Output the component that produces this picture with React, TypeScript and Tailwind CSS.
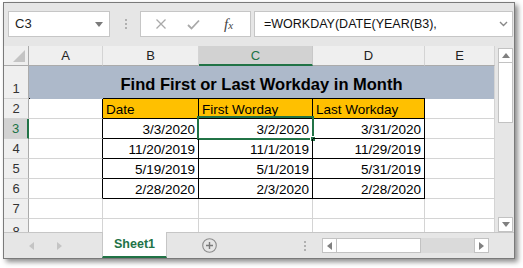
import React from "react";

// column widths include the 1px right gridline
const COLS = [
  { key: "A", w: 74 },
  { key: "B", w: 96 },
  { key: "C", w: 114 },
  { key: "D", w: 112 },
  { key: "E", w: 70 },
];

const DATA = [
  ["3/3/2020", "3/2/2020", "3/31/2020"],
  ["11/20/2019", "11/1/2019", "11/29/2019"],
  ["5/19/2019", "5/1/2019", "5/31/2019"],
  ["2/28/2020", "2/3/2020", "2/28/2020"],
];

function RowHead({ n, active, tall, cut }: { n: number; active?: boolean; tall?: boolean; cut?: boolean }) {
  return (
    <div
      className={`flex items-end justify-center text-[13px] leading-none ${
        tall ? "row-span-2 pb-[3px]" : cut ? "pb-0" : "pb-[3px]"
      } ${cut ? "" : "border-b border-[#d4d4d4]"} ${
        active
          ? "bg-[#d2d2d2] border-r-2 border-r-[#217346] text-[#217346]"
          : "bg-[#efefef] border-r border-r-[#ababab] text-[#333]"
      }`}
    >
      <span className={cut ? "translate-y-[6px]" : ""}>{n}</span>
    </div>
  );
}

function Cell({
  children,
  right,
  bottom,
  bg,
  align = "right",
}: {
  children?: React.ReactNode;
  right?: boolean;
  bottom?: boolean;
  bg?: string;
  align?: "left" | "right";
}) {
  return (
    <div
      className={`relative flex items-end border-r border-b pb-[2px] text-[13.5px] leading-none text-black ${
        align === "right" ? "justify-end pr-[3px]" : "justify-start pl-[3px]"
      } ${right ? "border-r-black" : "border-r-[#d4d4d4]"} ${
        bottom ? "border-b-black" : "border-b-[#d4d4d4]"
      } ${bg ?? ""}`}
    >
      {children}
    </div>
  );
}

function XIcon() {
  return (
    <svg width="12" height="12" viewBox="0 0 12 12">
      <path d="M1.5 1.5 L10.5 10.5 M10.5 1.5 L1.5 10.5" stroke="#a9a9a9" strokeWidth="1.3" fill="none" />
    </svg>
  );
}

function CheckIcon() {
  return (
    <svg width="13" height="11" viewBox="0 0 13 11">
      <path d="M1 6 L4.5 9.5 L12 1.5" stroke="#a9a9a9" strokeWidth="1.8" fill="none" />
    </svg>
  );
}

function Tri({ dir, color = "#808080" }: { dir: "up" | "down" | "left" | "right"; color?: string }) {
  const d =
    dir === "up"
      ? "M0 5 L4 0 L8 5 Z"
      : dir === "down"
        ? "M0 0 L8 0 L4 5 Z"
        : dir === "left"
          ? "M5 0 L5 8 L0 4 Z"
          : "M0 0 L0 8 L5 4 Z";
  const vert = dir === "up" || dir === "down";
  return (
    <svg width={vert ? 8 : 5} height={vert ? 5 : 8} viewBox={vert ? "0 0 8 5" : "0 0 5 8"}>
      <path d={d} fill={color} />
    </svg>
  );
}

function Dots({ className = "" }: { className?: string }) {
  return (
    <div className={`flex flex-col gap-[2px] ${className}`}>
      <span className="h-[2px] w-[2px] bg-[#b0b0b0]" />
      <span className="h-[2px] w-[2px] bg-[#b0b0b0]" />
      <span className="h-[2px] w-[2px] bg-[#b0b0b0]" />
    </div>
  );
}

export default function App() {
  return (
    <div className="h-[268px] w-[523px] overflow-hidden bg-white pl-[3px] pt-[2px] font-['Liberation_Sans',Arial,sans-serif]">
      <div className="flex h-[257px] w-[512px] flex-col border border-[#7a7a7a] bg-[#e6e6e6] shadow-[3px_3px_5px_rgba(0,0,0,0.45)]">
        {/* formula bar */}
        <div className="flex h-[43px] shrink-0 items-start pt-[8px]">
          <div className="ml-[4px] flex h-[26px] w-[102px] items-center justify-between border border-[#c6c6c6] bg-white pl-[6px] pr-[6px] text-[13px] text-[#222]">
            <span>C3</span>
            <Tri dir="down" color="#7a7a7a" />
          </div>
          <Dots className="ml-[15px] mt-[8px]" />
          <div className="ml-[13px] flex h-[26px] w-[111px] items-center border border-[#c6c6c6] bg-white">
            <span className="ml-[14px] flex"><XIcon /></span>
            <span className="ml-[20px] flex"><CheckIcon /></span>
            <span className="ml-[24px] font-['Liberation_Serif',serif] text-[15px] italic leading-none text-[#444]">
              f<span className="text-[11px]">x</span>
            </span>
          </div>
          <div className="ml-[3px] flex h-[26px] w-[259px] items-center justify-between border border-[#c6c6c6] bg-white pl-[9px] pr-[4px] text-[12.5px] text-[#111]">
            <span>=WORKDAY(DATE(YEAR(B3),</span>
            <svg width="9" height="6" viewBox="0 0 9 6">
              <path d="M1 1 L4.5 4.5 L8 1" stroke="#888" strokeWidth="1.4" fill="none" />
            </svg>
          </div>
        </div>

        {/* sheet + vertical scroll */}
        <div className="flex h-[186px] shrink-0">
          <div className="grid w-[491px] shrink-0 grid-cols-[25px_74px_96px_114px_112px_70px] grid-rows-[20px_32px_1px_20px_20px_20px_20px_20px_20px_13px] bg-white">
            {/* column headers */}
            <div className="relative border-b border-r border-[#ababab] bg-[#efefef]">
              <svg className="absolute bottom-[3px] right-[3px]" width="12" height="12" viewBox="0 0 12 12">
                <path d="M12 0 L12 12 L0 12 Z" fill="#c4c4c4" />
              </svg>
            </div>
            {COLS.map((c) =>
              c.key === "C" ? (
                <div
                  key={c.key}
                  className="flex items-center justify-center border-b-2 border-r border-b-[#217346] border-r-[#c8c8c8] bg-[#d2d2d2] pt-[2px] text-[13px] text-[#217346]"
                >
                  {c.key}
                </div>
              ) : (
                <div
                  key={c.key}
                  className="flex items-center justify-center border-b border-r border-b-[#ababab] border-r-[#d4d4d4] bg-[#efefef] text-[13px] text-[#222]"
                >
                  {c.key}
                </div>
              ),
            )}

            {/* row 1: title */}
            <RowHead n={1} tall />
            <div className="col-span-5 flex items-center justify-center border-r border-r-[#d4d4d4] bg-[#adb9ca] pt-[4px] text-[16.5px] font-bold text-black">
              Find First or Last Workday in Month
            </div>
            <div className="bg-black shadow-[inset_-73px_0_0_#adb9ca]" />
            <div className="bg-black" />
            <div className="bg-black" />
            <div className="bg-black" />
            <div className="border-r border-r-[#d4d4d4] bg-[#adb9ca]" />

            {/* row 2: table head */}
            <RowHead n={2} />
            <Cell right />
            <Cell right bottom bg="bg-[#ffc000]" align="left">Date</Cell>
            <Cell right bottom bg="bg-[#ffc000]" align="left">First Worday</Cell>
            <Cell right bottom bg="bg-[#ffc000]" align="left">Last Workday</Cell>
            <Cell />

            {/* rows 3-6 */}
            {DATA.map((r, i) => (
              <React.Fragment key={i}>
                <RowHead n={i + 3} active={i === 0} />
                <Cell right />
                <Cell right bottom>{r[0]}</Cell>
                <Cell right bottom>
                  {r[1]}
                  {i === 0 && (
                    <>
                      <span className="pointer-events-none absolute -bottom-[2px] -left-[2px] -right-[2px] -top-[3px] border-2 border-[#217346]" />
                      <span className="absolute -bottom-[4px] -right-[4px] h-[6px] w-[6px] border border-white bg-[#217346]" />
                    </>
                  )}
                </Cell>
                <Cell right bottom>{r[2]}</Cell>
                <Cell />
              </React.Fragment>
            ))}

            {/* row 7 */}
            <RowHead n={7} />
            <Cell />
            <Cell />
            <Cell />
            <Cell />
            <Cell />

            {/* row 8 (cut off by the tab bar) */}
            <div className="overflow-hidden">
              <RowHead n={8} cut />
            </div>
            {COLS.map((c) => (
              <div key={c.key} className="border-r border-[#d4d4d4]" />
            ))}
          </div>

          {/* vertical scrollbar */}
          <div className="ml-[3px] flex w-[15px] flex-col pt-[2px]">
            <div className="flex h-[15px] items-center justify-center border border-[#c2c2c2] bg-white">
              <Tri dir="up" />
            </div>
            <div className="h-[60px] border border-t-0 border-[#c2c2c2] bg-white" />
            <div className="flex-1" />
            <div className="flex h-[15px] items-center justify-center border border-[#c2c2c2] bg-white">
              <Tri dir="down" />
            </div>
          </div>
        </div>

        {/* sheet tabs */}
        <div className="flex flex-1 items-stretch border-t border-[#c6c6c6]">
          <div className="flex w-[98px] items-center pl-[25px]">
            <Tri dir="left" color="#c4c4c4" />
            <span className="ml-[23px] flex"><Tri dir="right" color="#c4c4c4" /></span>
          </div>
          <div className="-mt-px flex w-[65px] items-center justify-center border-b-2 border-l border-r border-b-[#217346] border-l-[#c6c6c6] border-r-[#c6c6c6] bg-white pt-[1px] text-[12.5px] font-bold text-[#217346]">
            Sheet1
          </div>
          <div className="ml-[35px] flex items-center">
            <svg width="15" height="15" viewBox="0 0 15 15">
              <circle cx="7.5" cy="7.5" r="6.8" stroke="#8c8c8c" strokeWidth="1.1" fill="none" />
              <path d="M7.5 4 V11 M4 7.5 H11" stroke="#7a7a7a" strokeWidth="1.4" />
            </svg>
          </div>
          <div className="ml-[87px] flex items-center">
            <Dots />
          </div>
          <div className="ml-[16px] flex items-center">
            <div className="flex h-[15px] w-[167px]">
              <div className="flex w-[15px] items-center justify-center border border-[#c2c2c2] bg-white">
                <Tri dir="left" />
              </div>
              <div className="w-[84px] border border-l-0 border-[#c2c2c2] bg-white" />
              <div className="flex-1 bg-[#dadada]" />
              <div className="flex w-[15px] items-center justify-center border border-[#c2c2c2] bg-white">
                <Tri dir="right" />
              </div>
            </div>
          </div>
        </div>
      </div>
    </div>
  );
}
